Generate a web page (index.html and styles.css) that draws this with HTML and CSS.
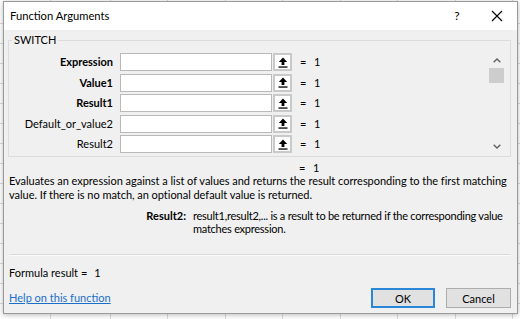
FILE: index.html
```html
<!DOCTYPE html>
<html>
<head>
<meta charset="utf-8">
<link rel="stylesheet" href="styles.css">
</head>
<body>
<div class="desk">
  <div class="dialog">
    <div class="titlebar">
      <span class="title">Function Arguments</span>
      <span class="help">?</span>
      <svg class="close" width="12" height="12" viewBox="0 0 12 12"><path d="M1 1 L11 11 M11 1 L1 11" stroke="#000" stroke-width="1.1" fill="none"/></svg>
    </div>
    <div class="body">
      <fieldset class="group">
        <legend>SWITCH</legend>
        <div class="argarea">
          <div class="args">
            <div class="row"><span class="lbl req">Expression</span><span class="box"></span><span class="ref"><svg width="10" height="11" viewBox="0 0 10 11"><path d="M5 0.5 L9.2 5 L6.4 5 L6.4 8 L3.6 8 L3.6 5 L0.8 5 Z" fill="#000"/><rect x="0.5" y="9.4" width="9" height="1.3" fill="#000"/></svg></span><span class="eq">=</span><span class="val">1</span></div>
            <div class="row"><span class="lbl req">Value1</span><span class="box"></span><span class="ref"><svg width="10" height="11" viewBox="0 0 10 11"><path d="M5 0.5 L9.2 5 L6.4 5 L6.4 8 L3.6 8 L3.6 5 L0.8 5 Z" fill="#000"/><rect x="0.5" y="9.4" width="9" height="1.3" fill="#000"/></svg></span><span class="eq">=</span><span class="val">1</span></div>
            <div class="row"><span class="lbl req">Result1</span><span class="box"></span><span class="ref"><svg width="10" height="11" viewBox="0 0 10 11"><path d="M5 0.5 L9.2 5 L6.4 5 L6.4 8 L3.6 8 L3.6 5 L0.8 5 Z" fill="#000"/><rect x="0.5" y="9.4" width="9" height="1.3" fill="#000"/></svg></span><span class="eq">=</span><span class="val">1</span></div>
            <div class="row"><span class="lbl">Default_or_value2</span><span class="box"></span><span class="ref"><svg width="10" height="11" viewBox="0 0 10 11"><path d="M5 0.5 L9.2 5 L6.4 5 L6.4 8 L3.6 8 L3.6 5 L0.8 5 Z" fill="#000"/><rect x="0.5" y="9.4" width="9" height="1.3" fill="#000"/></svg></span><span class="eq">=</span><span class="val">1</span></div>
            <div class="row"><span class="lbl">Result2</span><span class="box"></span><span class="ref"><svg width="10" height="11" viewBox="0 0 10 11"><path d="M5 0.5 L9.2 5 L6.4 5 L6.4 8 L3.6 8 L3.6 5 L0.8 5 Z" fill="#000"/><rect x="0.5" y="9.4" width="9" height="1.3" fill="#000"/></svg></span><span class="eq">=</span><span class="val">1</span></div>
          </div>
          <div class="scrollbar">
            <div class="sbtn"><svg width="8" height="5" viewBox="0 0 8 5"><path d="M0.7 4.3 L4 1 L7.3 4.3" stroke="#606060" stroke-width="1.4" fill="none"/></svg></div>
            <div class="thumb"></div>
            <div class="track"></div>
            <div class="sbtn"><svg width="8" height="5" viewBox="0 0 8 5"><path d="M0.7 0.7 L4 4 L7.3 0.7" stroke="#606060" stroke-width="1.4" fill="none"/></svg></div>
          </div>
        </div>
      </fieldset>
      <div class="total"><span class="eq">=</span><span class="val">1</span></div>
      <p class="desc">Evaluates an expression against a list of values and returns the result corresponding to the first matching<br>value. If there is no match, an optional default value is returned.</p>
      <div class="argdesc">
        <span class="argname">Result2:</span>
        <span class="argtext">result1,result2,... is a result to be returned if the corresponding value<br>matches expression.</span>
      </div>
      <div class="sep"></div>
      <div class="formula"><span>Formula result =</span><span class="fval">1</span></div>
      <div class="footer">
        <a class="link" href="#">Help on this function</a>
        <div class="buttons">
          <button class="btn default">OK</button>
          <button class="btn">Cancel</button>
        </div>
      </div>
    </div>
  </div>
</div>
</body>
</html>
```
FILE: styles.css
```css
html, body {
  margin: 0;
  padding: 0;
  background: #fff;
}
body {
  font-family: Lato, "Noto Sans", sans-serif;
  font-size: 11px;
  line-height: 14px;
  color: #000;
}
.desk {
  width: 517px;
  height: 318px;
  overflow: hidden;
  padding: 1px 0 0 3px;
  background-color: #fff;
  background-image:
    repeating-linear-gradient(90deg, transparent 0 56.5px, #dadada 56.5px 57.5px),
    repeating-linear-gradient(180deg, transparent 0 19px, #dadada 19px 20px);
  background-position: 53px 0, 0 4px;
}
.dialog {
  position: relative;
  z-index: 1;
  width: 513px;
  height: 311px;
  border: 1px solid #9a9a9a;
  background-color: #f0f0f0;
  box-shadow: 0 1px 5px rgba(0, 0, 0, 0.28);
  display: flex;
  flex-direction: column;
  overflow: hidden;
}
.titlebar {
  flex: 0 0 28px;
  height: 28px;
  background: #fff;
  display: flex;
  align-items: center;
  padding-left: 6px;
}
.title {
  font-size: 11.2px;
  flex: 1;
}
.help {
  font-size: 12px;
  width: 12px;
  margin-right: 28px;
  text-align: center;
}
.close {
  margin-right: 14px;
}
.body {
  padding: 3px 6px 0 4px;
  display: flex;
  flex-direction: column;
  flex: 1 1 auto;
  background: #f0f0f0;
}
.body > * {
  flex-shrink: 0;
}
.group {
  margin: 0;
  padding: 6px 0 3px 0;
  border: 1px solid #dcdcdc;
  min-width: 0;
  background: #f0f0f0;
}
.group legend {
  padding: 0 2px;
  margin-left: 3px;
  line-height: 14px;
}
.argarea {
  display: flex;
}
.args {
  flex: 1;
  display: flex;
  flex-direction: column;
  gap: 2.5px;
}
.row {
  display: flex;
  align-items: center;
  height: 18px;
  white-space: nowrap;
}
.lbl {
  width: 104px;
  padding-right: 7px;
  text-align: right;
  flex-shrink: 0;
}
.req {
  font-weight: bold;
}
.box {
  width: 150px;
  height: 16px;
  border: 1px solid #b9b9b9;
  background: #fff;
  flex-shrink: 0;
}
.ref {
  box-sizing: border-box;
  width: 19px;
  height: 18px;
  margin-left: 1px;
  border: 2px solid #c9c9c9;
  background: #fff;
  display: flex;
  align-items: center;
  justify-content: center;
  flex-shrink: 0;
}
.eq {
  margin-left: 8px;
  width: 14px;
}
.val {
  width: 10px;
}
.scrollbar {
  width: 15px;
  margin-right: 6px;
  display: flex;
  flex-direction: column;
}
.sbtn {
  height: 14px;
  display: flex;
  align-items: center;
  justify-content: center;
}
.thumb {
  margin-top: 1px;
  height: 15px;
  background: #cdcdcd;
}
.track {
  flex: 1;
}
.total {
  margin-top: 4px;
  padding-left: 283px;
  line-height: 13px;
  display: flex;
}
.desc {
  margin: 0;
  line-height: 14px;
  padding-left: 1px;
  white-space: nowrap;
  letter-spacing: -0.03px;
}
.argdesc {
  margin-top: 7px;
  display: flex;
  line-height: 13px;
  white-space: nowrap;
}
.argname {
  flex: 0 0 178px;
  width: 178px;
  text-align: right;
  font-weight: bold;
  padding-right: 7px;
}
.argtext {
  letter-spacing: -0.25px;
}
.sep {
  margin-top: 19px;
  height: 1px;
  background: #d9d9d9;
  border-bottom: 1px solid #fafafa;
  margin-left: 1px;
}
.formula {
  margin-top: 10px;
  line-height: 14px;
  padding-left: 1px;
  display: flex;
}
.fval {
  margin-left: 7px;
}
.footer {
  margin-top: 8px;
  display: flex;
  align-items: center;
  justify-content: space-between;
  padding-left: 1px;
}
.link {
  color: #1a6fc9;
  text-decoration: underline;
}
.buttons {
  display: flex;
  gap: 11px;
}
.btn {
  box-sizing: border-box;
  width: 65px;
  height: 20px;
  border: 1px solid #adadad;
  background: #e1e1e1;
  font-family: Lato, "Noto Sans", sans-serif;
  font-size: 11px;
  color: #000;
  padding: 0;
}
.btn.default {
  border: 2px solid #2a86d6;
  width: 64px;
}
```
